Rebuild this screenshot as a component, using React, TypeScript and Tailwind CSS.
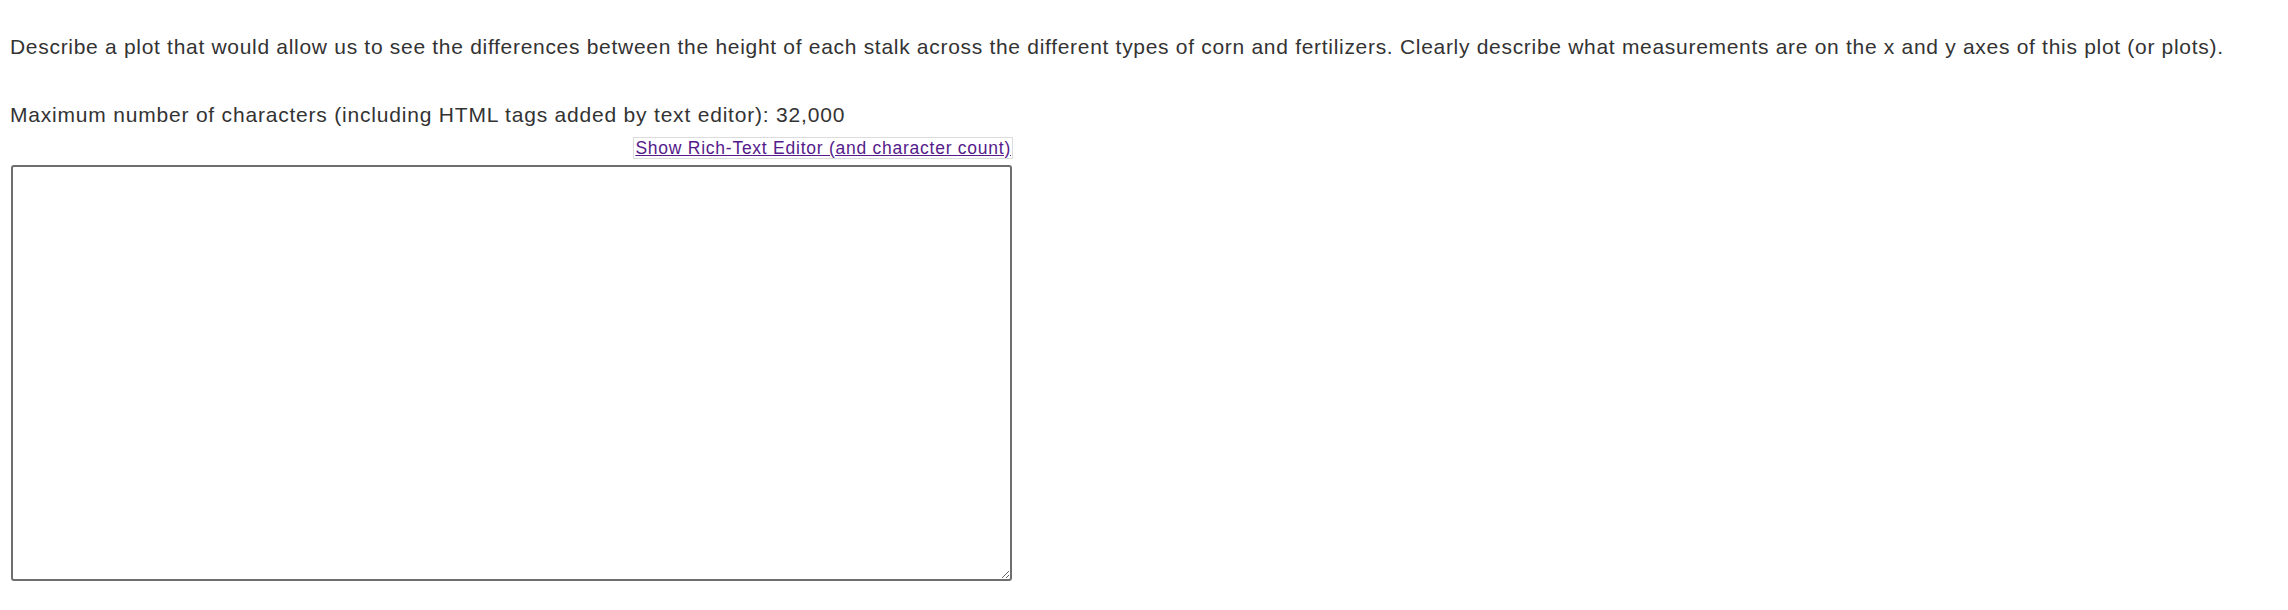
import React from "react";

export default function App() {
  return (
    <div
      className="min-h-[610px] w-[2288px] bg-white text-[#333333]"
      style={{ fontFamily: '"Liberation Sans", Arial, Helvetica, sans-serif' }}
    >
      <div className="px-[10px] pt-[35px]">
        <p className="text-[21px] leading-[24px] tracking-[0.7px]">
          Describe a plot that would allow us to see the differences between the height of each stalk across the different types of corn and fertilizers. Clearly describe what measurements are on the x and y axes of this plot (or plots).
        </p>
        <p className="mt-[44px] text-[21px] leading-[24px] tracking-[0.8px]">
          Maximum number of characters (including HTML tags added by text editor): 32,000
        </p>
        <div className="flex w-[1003px] flex-col items-end">
          <button
            type="button"
            className="mt-[10px] box-border h-[22px] border-[1.5px] border-[#dcdcdc] bg-white px-[1px] text-[17.5px] leading-[19px] tracking-[0.75px] text-[#551a8b] underline"
            style={{ fontFamily: '"Liberation Sans", Arial, Helvetica, sans-serif' }}
          >
            Show Rich-Text Editor (and character count)
          </button>
          <textarea
            className="mt-[6px] ml-[1px] block box-border h-[416px] w-[1001px] self-start rounded-[3px] border-2 border-[#6e6e6e] bg-white outline-none"
          />
        </div>
      </div>
    </div>
  );
}
